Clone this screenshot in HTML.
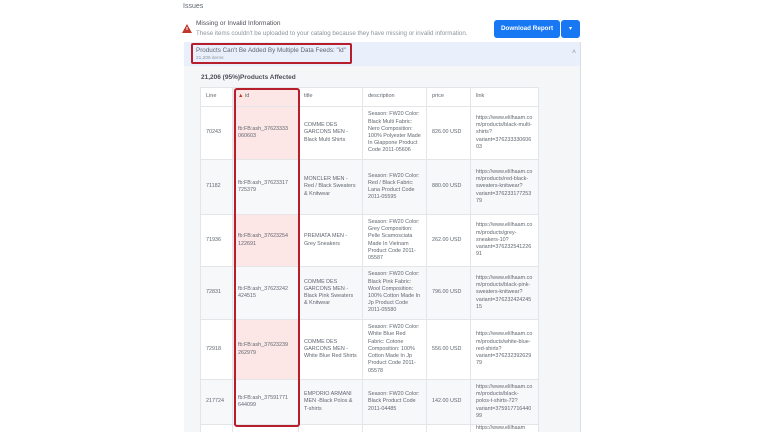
<!DOCTYPE html><html><head><style>
html,body{margin:0;width:768px;height:432px;overflow:hidden}
body{background:#fff;font-family:"Liberation Sans",sans-serif;position:relative;color:#4b4f56}
.a{position:absolute}
table{border-collapse:collapse;table-layout:fixed;font-size:5.4px;line-height:7.2px;color:#606770}
td{border:1px solid #e3e5e8;padding:0 5px;vertical-align:middle;background:#fff;overflow:hidden;word-wrap:break-word;overflow-wrap:anywhere}
tr.g td{background:#f7f8fa}
td.id{background:#fde6e6}
th{font-weight:normal;text-align:left;border:1px solid #e3e5e8;padding:0 5px;height:18px;background:#fff;font-size:5.5px}
</style></head><body>
<div class="a" style="left:183px;top:3px;font-size:7px;color:#606770">Issues</div>
<svg class="a" style="left:182px;top:24px" width="10" height="9"><path d="M5 0L10 9H0Z" fill="#c0392b"/><rect x="4.5" y="3" width="1" height="3" fill="#fff"/></svg>
<div class="a" style="left:196px;top:20px;font-size:6.5px;color:#4b4f56">Missing or Invalid Information</div>
<div class="a" style="left:196px;top:30px;font-size:6.2px;color:#8d949e">These items couldn't be uploaded to your catalog because they have missing or invalid information.</div>
<div class="a" style="left:494px;top:20px;width:66px;height:18px;background:#1877f2;border-radius:3px;color:#fff;font-size:6.3px;font-weight:bold;line-height:18px;text-align:center">Download Report</div>
<div class="a" style="left:561px;top:20px;width:19px;height:18px;background:#1877f2;border-radius:3px;color:#fff;font-size:6px;line-height:18px;text-align:center">▾</div>
<div class="a" style="left:184px;top:42px;width:396px;height:390px;background:#f5f6f8;border-right:1px solid #dadde1"></div>
<div class="a" style="left:184px;top:42px;width:396px;height:24px;background:#e9f0fb"></div>
<div class="a" style="left:191px;top:43px;width:161px;height:21px;border:2px solid #b51e2a;border-radius:2px;box-sizing:border-box"></div>
<div class="a" style="left:196px;top:47px;font-size:6.3px;color:#606770">Products Can't Be Added By Multiple Data Feeds: "id"</div>
<div class="a" style="left:196px;top:56px;font-size:4.8px;color:#8d949e">21,206 items</div>
<div class="a" style="left:572px;top:49px;font-size:7px;color:#8d949e">˄</div>
<div class="a" style="left:201px;top:74px;font-size:6.5px;font-weight:bold;color:#4b4f56">21,206 (95%)Products Affected</div>
<table class="a" style="left:200px;top:87px;width:338px">
<colgroup><col style="width:32px"><col style="width:66px"><col style="width:64px"><col style="width:64px"><col style="width:44px"><col style="width:68px"></colgroup>
<tr><th>Line</th><th style="background:#fde6e6"><span style="color:#c0392b">▲</span> id</th><th>title</th><th>description</th><th>price</th><th>link</th></tr>
<tr style="height:53px"><td>70243</td><td class="id">fb:FB:ash_37623333 060603</td><td>COMME DES GARCONS MEN - Black Multi Shirts</td><td>Season: FW20 Color: Black Multi Fabric: Nero Composition: 100% Polyester Made In Giappone Product Code 2011-05606</td><td>826.00 USD</td><td>https://www.elilhaam.com/products/black-multi-shirts?variant=37623333060603</td></tr>
<tr class="g" style="height:55px"><td>71182</td><td class="id">fb:FB:ash_37623317 725379</td><td>MONCLER MEN - Red / Black Sweaters &amp; Knitwear</td><td>Season: FW20 Color: Red / Black Fabric: Lana Product Code 2011-05595</td><td>880.00 USD</td><td>https://www.elilhaam.com/products/red-black-sweaters-knitwear?variant=37623317725379</td></tr>
<tr style="height:52px"><td>71936</td><td class="id">fb:FB:ash_37623254 122691</td><td>PREMIATA MEN - Grey Sneakers</td><td>Season: FW20 Color: Grey Composition: Pelle Scamosciata Made In Vietnam Product Code 2011-05587</td><td>262.00 USD</td><td>https://www.elilhaam.com/products/grey-sneakers-10?variant=37623254122691</td></tr>
<tr class="g" style="height:53px"><td>72831</td><td class="id">fb:FB:ash_37623242 424515</td><td>COMME DES GARCONS MEN - Black Pink Sweaters &amp; Knitwear</td><td>Season: FW20 Color: Black Pink Fabric: Wool Composition: 100% Cotton Made In Jp Product Code 2011-05580</td><td>796.00 USD</td><td>https://www.elilhaam.com/products/black-pink-sweaters-knitwear?variant=37623242424515</td></tr>
<tr style="height:60px"><td>72918</td><td class="id">fb:FB:ash_37623239 262979</td><td>COMME DES GARCONS MEN - White Blue Red Shirts</td><td>Season: FW20 Color: White Blue Red Fabric: Cotone Composition: 100% Cotton Made In Jp Product Code 2011-05578</td><td>556.00 USD</td><td>https://www.elilhaam.com/products/white-blue-red-shirts?variant=37623239262979</td></tr>
<tr class="g" style="height:45px"><td>217724</td><td class="id">fb:FB:ash_37591771 644099</td><td>EMPORIO ARMANI MEN -Black Polos &amp; T-shirts</td><td>Season: FW20 Color: Black Product Code 2011-04485</td><td>142.00 USD</td><td>https://www.elilhaam.com/products/black-polos-t-shirts-72?variant=37591771644099</td></tr>
<tr style="height:8px"><td></td><td></td><td></td><td></td><td></td><td style="vertical-align:top">https://www.elilhaam</td></tr>
</table>
<div class="a" style="left:234px;top:88px;width:66px;height:339px;border:2.5px solid #b51e2a;border-radius:3px;box-sizing:border-box"></div>
</body></html>
